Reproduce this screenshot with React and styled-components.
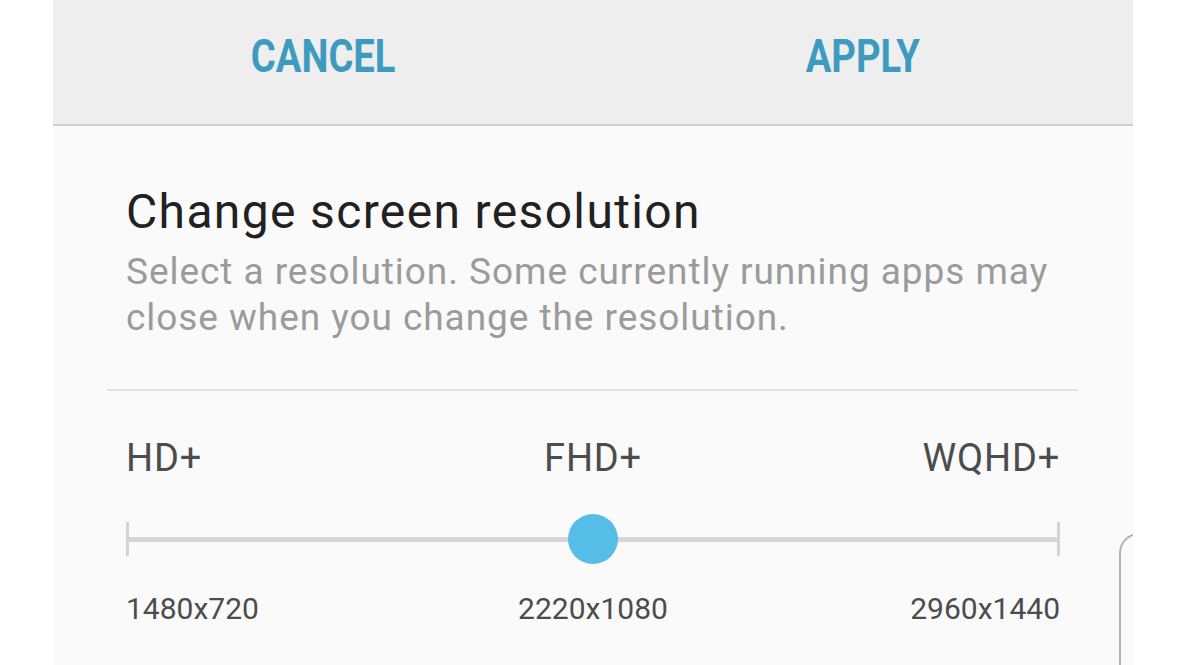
import React from 'react';
import styled, { createGlobalStyle } from 'styled-components';

const GlobalStyle = createGlobalStyle`
  html, body {
    margin: 0;
    padding: 0;
    background: #ffffff;
  }
  body {
    font-family: Roboto, "Noto Sans", "Liberation Sans", sans-serif;
  }
`;

const Page = styled.div`
  width: 1183px;
  height: 665px;
  display: flex;
  justify-content: flex-start;
  background: #ffffff;
  overflow: hidden;
`;

const Panel = styled.div`
  position: relative;
  margin-left: 53px;
  width: 1080px;
  height: 665px;
  background: #fafafa;
  overflow: hidden;
  display: flex;
  flex-direction: column;
`;

const ActionBar = styled.div`
  height: 124px;
  flex-shrink: 0;
  display: grid;
  grid-template-columns: 1fr 1fr;
  background: #eeeeee;
  border-bottom: 2px solid #cdcdcd;
`;

const ActionButton = styled.button`
  border: none;
  background: transparent;
  display: flex;
  align-items: center;
  justify-content: center;
  padding: 0 0 13px;
  cursor: pointer;

  span {
    display: inline-block;
    font-family: Roboto, "Liberation Sans", sans-serif;
    font-weight: 700;
    font-size: 46px;
    color: #3e9bbf;
    transform: scaleX(0.83);
  }
`;

const Body = styled.div`
  padding: 58px 0 0;
  display: flex;
  flex-direction: column;
`;

const TextBlock = styled.div`
  padding: 0 73px;
`;

const Title = styled.h1`
  margin: 0;
  font-size: 48px;
  line-height: 56px;
  font-weight: 400;
  letter-spacing: 1.35px;
  color: #212121;
`;

const Description = styled.p`
  margin: 9px 0 0;
  font-size: 37px;
  line-height: 46px;
  letter-spacing: 0.95px;
  color: #9b9b9b;
`;

const Divider = styled.hr`
  margin: 48px 55px 0 54px;
  border: none;
  border-top: 2px solid #e3e3e3;
`;

const SliderBlock = styled.div`
  padding: 45px 73px 0;
  display: flex;
  flex-direction: column;
`;

const LabelRow = styled.div`
  display: grid;
  grid-template-columns: 1fr auto 1fr;
  font-size: ${(p) => p.$size}px;
  line-height: ${(p) => p.$line}px;
  letter-spacing: ${(p) => p.$spacing || 0}px;
  color: #4c4c4c;
  margin-top: ${(p) => p.$top || 0}px;

  span:first-child {
    justify-self: start;
  }
  span:last-child {
    justify-self: end;
  }
`;

const Track = styled.div`
  position: relative;
  display: flex;
  align-items: center;
  border-left: 3px solid #d4d4d4;
  border-right: 3px solid #d4d4d4;
  height: 34px;
  margin-top: 42px;

  &::before {
    content: '';
    flex: 1;
    height: 5px;
    background: #d6d6d6;
  }
`;

const Thumb = styled.div`
  position: absolute;
  top: 50%;
  width: 50px;
  height: 50px;
  border-radius: 50%;
  background: #55bde6;
  transform: translate(-50%, -50%);
`;

const EdgeCorner = styled.div`
  position: absolute;
  left: 1066px;
  top: 533px;
  width: 40px;
  height: 200px;
  border-left: 2px solid #b4b4b4;
  border-top: 2px solid #b4b4b4;
  border-top-left-radius: 20px;
`;

const levels = [
  { name: 'HD+', size: '1480x720' },
  { name: 'FHD+', size: '2220x1080' },
  { name: 'WQHD+', size: '2960x1440' },
];

export default function App() {
  const current = 1;
  const pos = (current / (levels.length - 1)) * 100;

  return (
    <>
      <GlobalStyle />
      <Page>
        <Panel>
          <ActionBar>
            <ActionButton>
              <span>CANCEL</span>
            </ActionButton>
            <ActionButton>
              <span>APPLY</span>
            </ActionButton>
          </ActionBar>
          <Body>
            <TextBlock>
              <Title>Change screen resolution</Title>
              <Description>
                Select a resolution. Some currently running apps may
                <br />
                close when you change the resolution.
              </Description>
            </TextBlock>
            <Divider />
            <SliderBlock>
              <LabelRow $size={38} $line={44} $spacing={0.8}>
                {levels.map((l) => (
                  <span key={l.name}>{l.name}</span>
                ))}
              </LabelRow>
              <Track>
                <Thumb style={{ left: `${pos}%` }} />
              </Track>
              <LabelRow $size={30} $line={36} $top={35}>
                {levels.map((l) => (
                  <span key={l.size}>{l.size}</span>
                ))}
              </LabelRow>
            </SliderBlock>
          </Body>
          <EdgeCorner />
        </Panel>
      </Page>
    </>
  );
}
